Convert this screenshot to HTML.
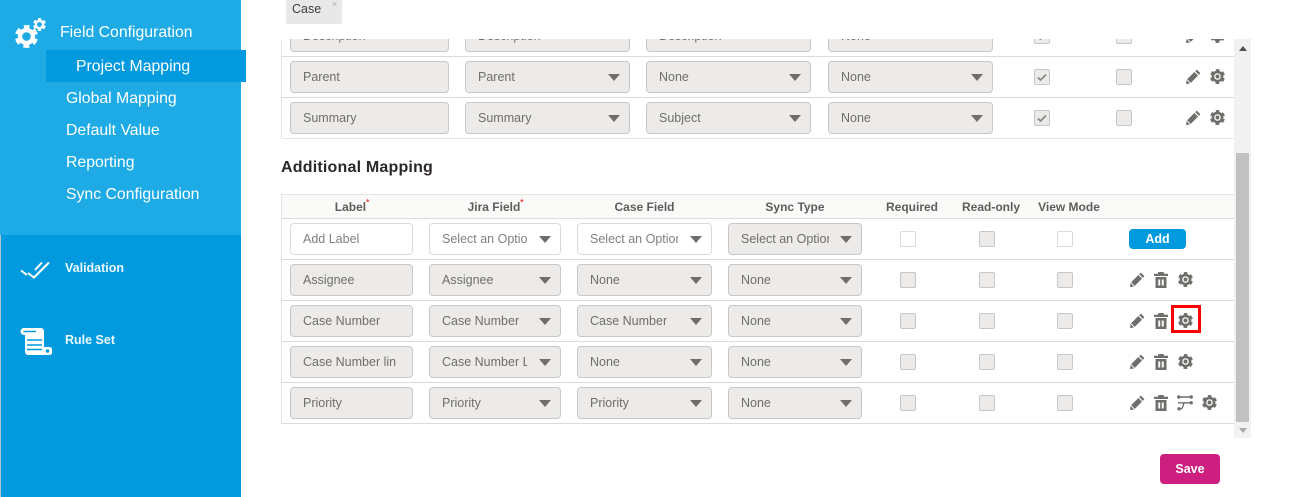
<!DOCTYPE html>
<html><head><meta charset="utf-8">
<style>
html,body{margin:0;padding:0;background:#fff}
body{width:1291px;height:497px;position:relative;overflow:hidden;font-family:"Liberation Sans",sans-serif;font-size:12.5px;color:#706e6b}
div,span,svg{position:absolute;box-sizing:border-box}
.nav{color:#fff;font-size:15.8px;white-space:nowrap;line-height:20px}
.nav2{color:#eaf7fd;font-size:12.5px;font-weight:bold;white-space:nowrap;line-height:16px}
.row{left:0;width:953px;height:41px;border-bottom:1px solid #dddbda}
.f{height:32px;top:4px;background:#ecebea;border:1px solid #c9c7c5;border-radius:4px;line-height:30px;padding-left:12px;white-space:nowrap;overflow:hidden}
.f.w{background:#fff;border-color:#dddbda;color:#80807e}
.f:not(.n)::after{content:"";position:absolute;right:9px;top:12px;border-left:6px solid transparent;border-right:6px solid transparent;border-top:7px solid #706e6b}
.f i{font-style:normal;display:block;overflow:hidden}
.a{left:8px;width:159px}.b{left:183px;width:165px}.c1{left:364px;width:165px}.d{left:546px;width:165px}
.a2{left:8px;width:123px}.b2{left:147px;width:132px}.c2{left:295px;width:135px}.d2{left:446px;width:134px}
.k{width:16px;height:16px;top:12px;background:#ecebea;border:1px solid #c9c7c5;border-radius:2px}
.k.w{background:#fff;border-color:#dddbda}
.k svg{left:2px;top:2px}
.th{top:0;height:24px;line-height:25px;text-align:center;font-weight:bold;font-size:12px;color:#5f5d5b;white-space:nowrap}
.th sup{color:#e33;font-size:8px;line-height:0;position:relative;top:-1px;vertical-align:super}
.ic{fill:#706e6b}
</style></head><body>
<svg width="0" height="0" style="left:0;top:0">
<defs>
<symbol id="gear" viewBox="0 0 16 16"><g transform="rotate(-90 8 8)"><circle cx="8" cy="8" r="6.800" fill="none" stroke="#706e6b" stroke-width="2.400" stroke-dasharray="3.900 3.220" stroke-dashoffset="1.950"/></g><circle cx="8" cy="8" r="4.900" fill="none" stroke="#706e6b" stroke-width="2.800"/><circle class="ic" cx="8" cy="8" r="2.100"/></symbol>
<symbol id="pen" viewBox="0 0 16 16"><path class="ic" d="M11.500.6l3.900 3.900-1.700 1.700-3.900-3.900zM8.900 3.200l3.900 3.900-7.700 7.700-3.900-3.900zM.6 11.700l3.700 3.700-4.300.6z"/></symbol>
<symbol id="trash" viewBox="0 0 14 16"><path class="ic" fill-rule="evenodd" d="M4.500 0h5l.6 1.800H14v2.200H0V1.800h3.900zM1.500 5h11v11h-11zM4.300 7.500v6h1.900v-6zm3.500 0v6h1.900v-6z"/></symbol>
<symbol id="flow" viewBox="0 0 16 16"><g fill="none" stroke="#706e6b" stroke-width="1.400"><path d="M1 2h14M1 7.800h13M8 7.800c-2.500 0-1.500 6-4 6H2"/></g><circle class="ic" cx="1.800" cy="2" r="1.700"/><circle class="ic" cx="14.200" cy="2" r="1.700"/><circle class="ic" cx="14.200" cy="7.800" r="1.700"/><circle class="ic" cx="2" cy="13.800" r="1.700"/></symbol>
<symbol id="chk" viewBox="0 0 10 10"><path d="M1 5.500l2.500 2.500L9 2.500" fill="none" stroke="#8a8886" stroke-width="1.800"/></symbol>
<symbol id="wg" viewBox="0 0 16 16"><g transform="rotate(-90 8 8)"><circle cx="8" cy="8" r="6.500" fill="none" stroke="#fff" stroke-width="3" stroke-dasharray="3.900 2.900" stroke-dashoffset="1.950"/></g><circle cx="8" cy="8" r="4.500" fill="none" stroke="#fff" stroke-width="3"/></symbol>
</defs></svg>

<!-- sidebar -->
<div style="left:0;top:0;width:241px;height:235px;background:#1eabe5"></div>
<div style="left:0;top:235px;width:241px;height:262px;background:#019ade"></div>
<div style="left:0;top:235px;width:1px;height:262px;background:#b9c4cc"></div>
<div style="left:46px;top:50px;width:200px;height:32px;background:#019ade"></div>
<svg style="left:15px;top:25px" width="23" height="23"><use href="#wg"/></svg>
<svg style="left:33px;top:18px" width="13" height="13"><use href="#wg"/></svg>
<div class="nav" style="left:60px;top:23px">Field Configuration</div>
<div class="nav" style="left:76px;top:57px">Project Mapping</div>
<div class="nav" style="left:66px;top:89px">Global Mapping</div>
<div class="nav" style="left:66px;top:121px">Default Value</div>
<div class="nav" style="left:66px;top:153px">Reporting</div>
<div class="nav" style="left:66px;top:185px">Sync Configuration</div>
<svg style="left:20px;top:260px" width="32" height="20" viewBox="0 0 32 20"><path d="M1 10.500l6 4.500M8 13l6 4.500L29 2.500M15 10l7-7.500" fill="none" stroke="#fff" stroke-width="2"/></svg>
<div class="nav2" style="left:65px;top:260px">Validation</div>
<svg style="left:20px;top:327px" width="32" height="30" viewBox="0 0 32 30"><path fill="#fff" d="M4 1h17a3 3 0 0 1 3 3v16h5a3.800 3.800 0 0 1 0 8H8a3 3 0 0 1-3-3V8H4a3.500 3.500 0 0 1 0-7z"/><path d="M3.500 4.500H16M7 13h15M7 18h15M7 22.500h15" stroke="#019ade" stroke-width="1.600"/><circle cx="27.500" cy="24" r="1.700" fill="#019ade"/></svg>
<div class="nav2" style="left:65px;top:332px">Rule Set</div>

<!-- tab -->
<div style="left:286px;top:0;width:56px;height:24px;background:#e8e8e8;color:#3e3e3c;line-height:18px;padding-left:6px;font-size:12.5px">Case<span style="left:46px;top:-5px;font-size:9px;color:#aaa">×</span></div>

<!-- top table -->
<div style="left:281px;top:39px;width:953px;height:100px;overflow:hidden;border-left:1px solid #e5e5e5">
  <div class="row" style="top:-23px">
    <div class="f n a">Description</div><div class="f n b">Description</div><div class="f n c1">Description</div><div class="f n d">None</div>
    <div class="k" style="left:752px"><svg width="10" height="10"><use href="#chk"/></svg></div><div class="k" style="left:834px"></div>
    <svg style="left:904px;top:12px" width="15" height="15"><use href="#pen"/></svg><svg style="left:928px;top:12px" width="15" height="15"><use href="#gear"/></svg>
  </div>
  <div class="row" style="top:18px">
    <div class="f n a">Parent</div><div class="f b">Parent</div><div class="f c1">None</div><div class="f d">None</div>
    <div class="k" style="left:752px"><svg width="10" height="10"><use href="#chk"/></svg></div><div class="k" style="left:834px"></div>
    <svg style="left:904px;top:12px" width="15" height="15"><use href="#pen"/></svg><svg style="left:928px;top:12px" width="15" height="15"><use href="#gear"/></svg>
  </div>
  <div class="row" style="top:59px;border-bottom:2px solid #e5e5e5;height:42px">
    <div class="f n a">Summary</div><div class="f b">Summary</div><div class="f c1">Subject</div><div class="f d">None</div>
    <div class="k" style="left:752px"><svg width="10" height="10"><use href="#chk"/></svg></div><div class="k" style="left:834px"></div>
    <svg style="left:904px;top:12px" width="15" height="15"><use href="#pen"/></svg><svg style="left:928px;top:12px" width="15" height="15"><use href="#gear"/></svg>
  </div>
</div>

<div style="left:281px;top:158px;font-size:16px;font-weight:bold;color:#2b2826;letter-spacing:.2px;line-height:20px;white-space:nowrap">Additional Mapping</div>

<!-- additional table -->
<div style="left:281px;top:194px;width:953px;height:230px;border-left:1px solid #e5e5e5;border-top:1px solid #e5e5e5">
  <div style="left:0;top:0;width:953px;height:24px;background:#fafaf9;border-bottom:1px solid #dddbda"></div>
  <div class="th" style="left:0;width:140px">Label<sup>*</sup></div>
  <div class="th" style="left:147px;width:133px">Jira Field<sup>*</sup></div>
  <div class="th" style="left:295px;width:135px">Case Field</div>
  <div class="th" style="left:446px;width:134px">Sync Type</div>
  <div class="th" style="left:590px;width:80px">Required</div>
  <div class="th" style="left:669px;width:80px">Read-only</div>
  <div class="th" style="left:747px;width:80px">View Mode</div>

  <div class="row" style="top:24px">
    <div class="f w n a2">Add Label</div><div class="f w b2"><i style="width:85px">Select an Option</i></div><div class="f w c2"><i style="width:88px">Select an Option</i></div><div class="f d2"><i style="width:88px">Select an Option</i></div>
    <div class="k w" style="left:618px"></div><div class="k" style="left:697px"></div><div class="k w" style="left:775px"></div>
    <div style="left:847px;top:10px;width:57px;height:20px;background:#019ade;border-radius:4px;color:#fff;font-weight:bold;text-align:center;line-height:20px">Add</div>
  </div>
  <div class="row" style="top:65px">
    <div class="f n a2">Assignee</div><div class="f b2">Assignee</div><div class="f c2">None</div><div class="f d2">None</div>
    <div class="k" style="left:618px"></div><div class="k" style="left:697px"></div><div class="k" style="left:775px"></div>
    <svg style="left:848px;top:12px" width="15" height="15"><use href="#pen"/></svg><svg style="left:872px;top:12px" width="14" height="16"><use href="#trash"/></svg><svg style="left:896px;top:12px" width="15" height="15"><use href="#gear"/></svg>
  </div>
  <div class="row" style="top:106px">
    <div class="f n a2">Case Number</div><div class="f b2">Case Number</div><div class="f c2">Case Number</div><div class="f d2">None</div>
    <div class="k" style="left:618px"></div><div class="k" style="left:697px"></div><div class="k" style="left:775px"></div>
    <svg style="left:848px;top:12px" width="15" height="15"><use href="#pen"/></svg><svg style="left:872px;top:12px" width="14" height="16"><use href="#trash"/></svg><svg style="left:896px;top:12px" width="15" height="15"><use href="#gear"/></svg>
  </div>
  <div class="row" style="top:147px">
    <div class="f n a2"><i>Case Number lin</i></div><div class="f b2"><i style="width:85px">Case Number L</i></div><div class="f c2">None</div><div class="f d2">None</div>
    <div class="k" style="left:618px"></div><div class="k" style="left:697px"></div><div class="k" style="left:775px"></div>
    <svg style="left:848px;top:12px" width="15" height="15"><use href="#pen"/></svg><svg style="left:872px;top:12px" width="14" height="16"><use href="#trash"/></svg><svg style="left:896px;top:12px" width="15" height="15"><use href="#gear"/></svg>
  </div>
  <div class="row" style="top:188px">
    <div class="f n a2">Priority</div><div class="f b2">Priority</div><div class="f c2">Priority</div><div class="f d2">None</div>
    <div class="k" style="left:618px"></div><div class="k" style="left:697px"></div><div class="k" style="left:775px"></div>
    <svg style="left:848px;top:12px" width="15" height="15"><use href="#pen"/></svg><svg style="left:872px;top:12px" width="14" height="16"><use href="#trash"/></svg><svg style="left:895px;top:12px" width="16" height="16"><use href="#flow"/></svg><svg style="left:920px;top:12px" width="15" height="15"><use href="#gear"/></svg>
  </div>
</div>

<!-- red box -->
<div style="left:1171px;top:305px;width:30px;height:28px;border:3px solid #f00"></div>

<!-- scrollbar -->
<div style="left:1234px;top:39px;width:17px;height:399px;background:#f1f1f1"></div>
<div style="left:1236px;top:153px;width:13px;height:269px;background:#c1c1c1"></div>
<div style="left:1239px;top:46px;border-left:4px solid transparent;border-right:4px solid transparent;border-bottom:5px solid #505050"></div>
<div style="left:1239px;top:428px;border-left:4px solid transparent;border-right:4px solid transparent;border-top:5px solid #a8a8a8"></div>

<!-- save -->
<div style="left:1160px;top:454px;width:60px;height:30px;background:#cc1f7f;border-radius:4px;color:#fff;text-align:center;line-height:30px;font-weight:bold;font-size:12.5px">Save</div>
</body></html>
